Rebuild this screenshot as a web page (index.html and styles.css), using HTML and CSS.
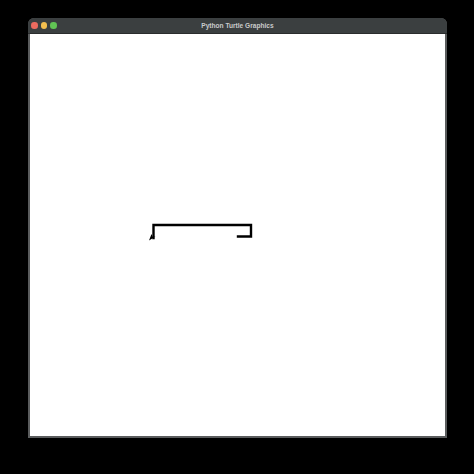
FILE: index.html
```html
<!DOCTYPE html>
<html>
<head>
<meta charset="utf-8">
<link rel="stylesheet" href="styles.css">
</head>
<body>
<div class="window">
  <div class="titlebar">
    <div class="lights">
      <span class="light red"></span>
      <span class="light yellow"></span>
      <span class="light green"></span>
    </div>
    <div class="title">Python Turtle Graphics</div>
  </div>
  <div class="canvas">
    <svg class="drawing" width="415" height="402" viewBox="0 0 415 402">
      <polyline points="208,202.5 221,202.5 221,191 123.5,191 123.5,204" fill="none" stroke="#000" stroke-width="2.4" stroke-linecap="square" stroke-linejoin="miter"/>
      <polygon points="119,206.5 121.5,200 122.8,203 125.5,202.5" fill="#000"/>
    </svg>
  </div>
</div>
</body>
</html>
```
FILE: styles.css
```css
html, body {
  margin: 0;
  padding: 0;
  background: #000;
}
body {
  width: 474px;
  height: 474px;
  overflow: hidden;
  font-family: "Liberation Sans", Arial, sans-serif;
}
.window {
  margin: 18px 0 0 28px;
  width: 419px;
  height: 420px;
  background: #5a5c5d;
  border-radius: 6px 6px 0 0;
  display: flex;
  flex-direction: column;
  box-sizing: border-box;
  padding: 0 2px 2px 2px;
}
.titlebar {
  height: 15px;
  margin: 0 -2px;
  background: #3b3f40;
  border-radius: 6px 6px 0 0;
  border-bottom: 1px solid #2a2c2d;
  display: flex;
  align-items: center;
  justify-content: center;
  position: relative;
}
.lights {
  position: absolute;
  left: 3px;
  top: 4px;
  display: flex;
  gap: 3px;
}
.light {
  width: 6.5px;
  height: 6.5px;
  border-radius: 50%;
  display: block;
}
.red { background: #ec6b5f; }
.yellow { background: #f4bf4f; }
.green { background: #61c454; }
.title {
  color: #c9cbcb;
  font-size: 6.6px;
  font-weight: bold;
  letter-spacing: 0;
}
.canvas {
  flex: 1;
  background: #fff;
  position: relative;
}
.drawing {
  position: absolute;
  left: 0;
  top: 0;
  display: block;
}
```
